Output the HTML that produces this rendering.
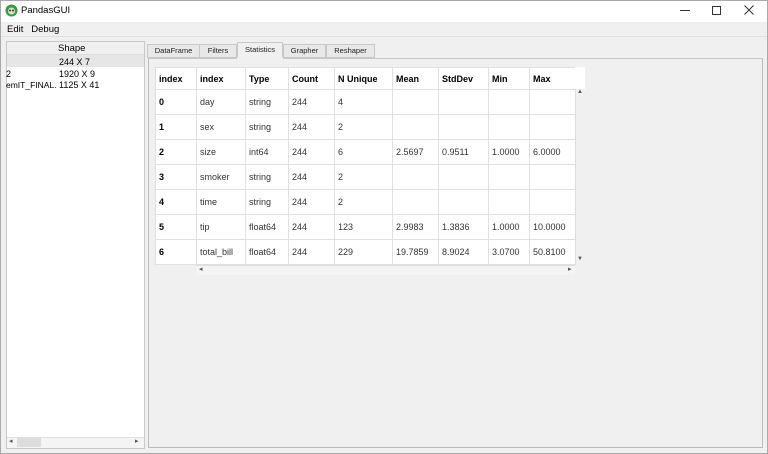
<!DOCTYPE html>
<html><head><style>
*{margin:0;padding:0;box-sizing:border-box}
body{width:768px;height:454px;background:#f0f0f0;font-family:"Liberation Sans",sans-serif;font-size:9px;color:#000;position:relative;overflow:hidden}
.a{position:absolute}
#title{left:0;top:0;width:768px;height:22px;background:#fff}
#win{left:0;top:0;width:768px;height:454px;border:1px solid #aaa;pointer-events:none}
table{border-collapse:collapse;table-layout:fixed}
td{border:1px solid #e0e0e0;height:25px;padding-left:3px;font-size:9px;color:#333;overflow:hidden;white-space:nowrap}
tr.h td{height:22px;font-weight:bold;color:#000;font-size:9px}
td:first-child{font-weight:bold;color:#000}
.tab{position:absolute;top:44px;height:14px;background:#e8e8e8;border:1px solid #c8c8c8;font-size:7.5px;text-align:center;line-height:12px;color:#222}
</style></head><body>
<div class="a" id="title"></div>
<svg class="a" style="left:5px;top:4px" width="13" height="13"><circle cx="6.5" cy="6.5" r="6" fill="#3a9a3a"/><circle cx="6.5" cy="7" r="3.5" fill="#ddd"/><circle cx="5" cy="6.5" r="1" fill="#333"/><circle cx="8" cy="6.5" r="1" fill="#333"/></svg>
<div class="a" style="left:21px;top:5px;font-size:9.5px">PandasGUI</div>
<div class="a" style="left:680px;top:10px;width:10px;height:1px;background:#333"></div>
<div class="a" style="left:712px;top:6px;width:9px;height:9px;border:1px solid #333"></div>
<svg class="a" style="left:744px;top:5px" width="10" height="10"><path d="M0.5 0.5L9.5 9.5M9.5 0.5L0.5 9.5" stroke="#333" stroke-width="1"/></svg>
<div class="a" style="left:7px;top:24px;font-size:9.5px">Edit&nbsp;&nbsp;&nbsp;Debug</div>
<div class="a" style="left:0;top:36px;width:768px;height:1px;background:#e0e0e0"></div>
<!-- left panel -->
<div class="a" style="left:6px;top:41px;width:139px;height:408px;background:#fff;border:1px solid #c8c8c8"></div>
<div class="a" style="left:7px;top:42px;width:137px;height:13px;background:#f0f0f0;border-bottom:1px solid #ddd"></div>
<div class="a" style="left:58px;top:43px;font-size:9.5px">Shape</div>
<div class="a" style="left:7px;top:55px;width:137px;height:12px;background:#e6e6e6"></div>
<div class="a" style="left:59px;top:57px">244 X 7</div>
<div class="a" style="left:6px;top:69px">2</div><div class="a" style="left:59px;top:69px">1920 X 9</div>
<div class="a" style="left:6px;top:80px;width:50px;overflow:hidden;white-space:nowrap;font-size:8.5px">emIT_FINAL...</div><div class="a" style="left:59px;top:80px">1125 X 41</div>
<div class="a" style="left:7px;top:437px;width:137px;height:11px;background:#f4f4f4;border-top:1px solid #e0e0e0"></div>
<div class="a" style="left:17px;top:438px;width:24px;height:9px;background:#ddd"></div>
<div class="a" style="left:9px;top:437px;font-size:7px;color:#555">◂</div>
<div class="a" style="left:135px;top:437px;font-size:7px;color:#555">▸</div>
<!-- tabs -->
<div class="tab" style="left:147px;width:53px">DataFrame</div>
<div class="tab" style="left:199px;width:38px">Filters</div>
<div class="tab" style="left:237px;width:46px;top:42px;height:17px;background:#f0f0f0;border-bottom:none;line-height:14px">Statistics</div>
<div class="tab" style="left:283px;width:43px">Grapher</div>
<div class="tab" style="left:326px;width:49px">Reshaper</div>
<div class="a" style="left:148px;top:58px;width:615px;height:390px;border:1px solid #bbb;border-top-color:#c8c8c8"></div>
<div class="a" style="left:237px;top:57px;width:46px;height:3px;background:#f0f0f0"></div>
<!-- table -->
<table class="a" style="left:155px;top:67px;width:420px;background:#fff">
<colgroup><col style="width:41px"><col style="width:49px"><col style="width:43px"><col style="width:46px"><col style="width:58px"><col style="width:46px"><col style="width:50px"><col style="width:41px"><col style="width:46px"></colgroup>
<tr class="h"><td>index</td><td>index</td><td>Type</td><td>Count</td><td>N Unique</td><td>Mean</td><td>StdDev</td><td>Min</td><td>Max</td></tr>
<tr><td>0</td><td>day</td><td>string</td><td>244</td><td>4</td><td></td><td></td><td></td><td></td></tr>
<tr><td>1</td><td>sex</td><td>string</td><td>244</td><td>2</td><td></td><td></td><td></td><td></td></tr>
<tr><td>2</td><td>size</td><td>int64</td><td>244</td><td>6</td><td>2.5697</td><td>0.9511</td><td>1.0000</td><td>6.0000</td></tr>
<tr><td>3</td><td>smoker</td><td>string</td><td>244</td><td>2</td><td></td><td></td><td></td><td></td></tr>
<tr><td>4</td><td>time</td><td>string</td><td>244</td><td>2</td><td></td><td></td><td></td><td></td></tr>
<tr><td>5</td><td>tip</td><td>float64</td><td>244</td><td>123</td><td>2.9983</td><td>1.3836</td><td>1.0000</td><td>10.0000</td></tr>
<tr><td>6</td><td>total_bill</td><td>float64</td><td>244</td><td>229</td><td>19.7859</td><td>8.9024</td><td>3.0700</td><td>50.8100</td></tr>
</table>
<div class="a" style="left:575px;top:67px;width:10px;height:22px;background:#fff"></div>
<div class="a" style="left:575px;top:89px;width:10px;height:176px;background:#f0f0f0;border-left:1px solid #ddd"></div>
<div class="a" style="left:577px;top:89px;font-size:6px;color:#555">▲</div>
<div class="a" style="left:577px;top:256px;font-size:6px;color:#555">▼</div>
<div class="a" style="left:196px;top:265px;width:379px;height:10px;background:#f4f4f4;border-top:1px solid #ddd"></div>
<div class="a" style="left:199px;top:265px;font-size:7px;color:#555">◂</div>
<div class="a" style="left:568px;top:265px;font-size:7px;color:#555">▸</div>
<div class="a" id="win"></div>
</body></html>
